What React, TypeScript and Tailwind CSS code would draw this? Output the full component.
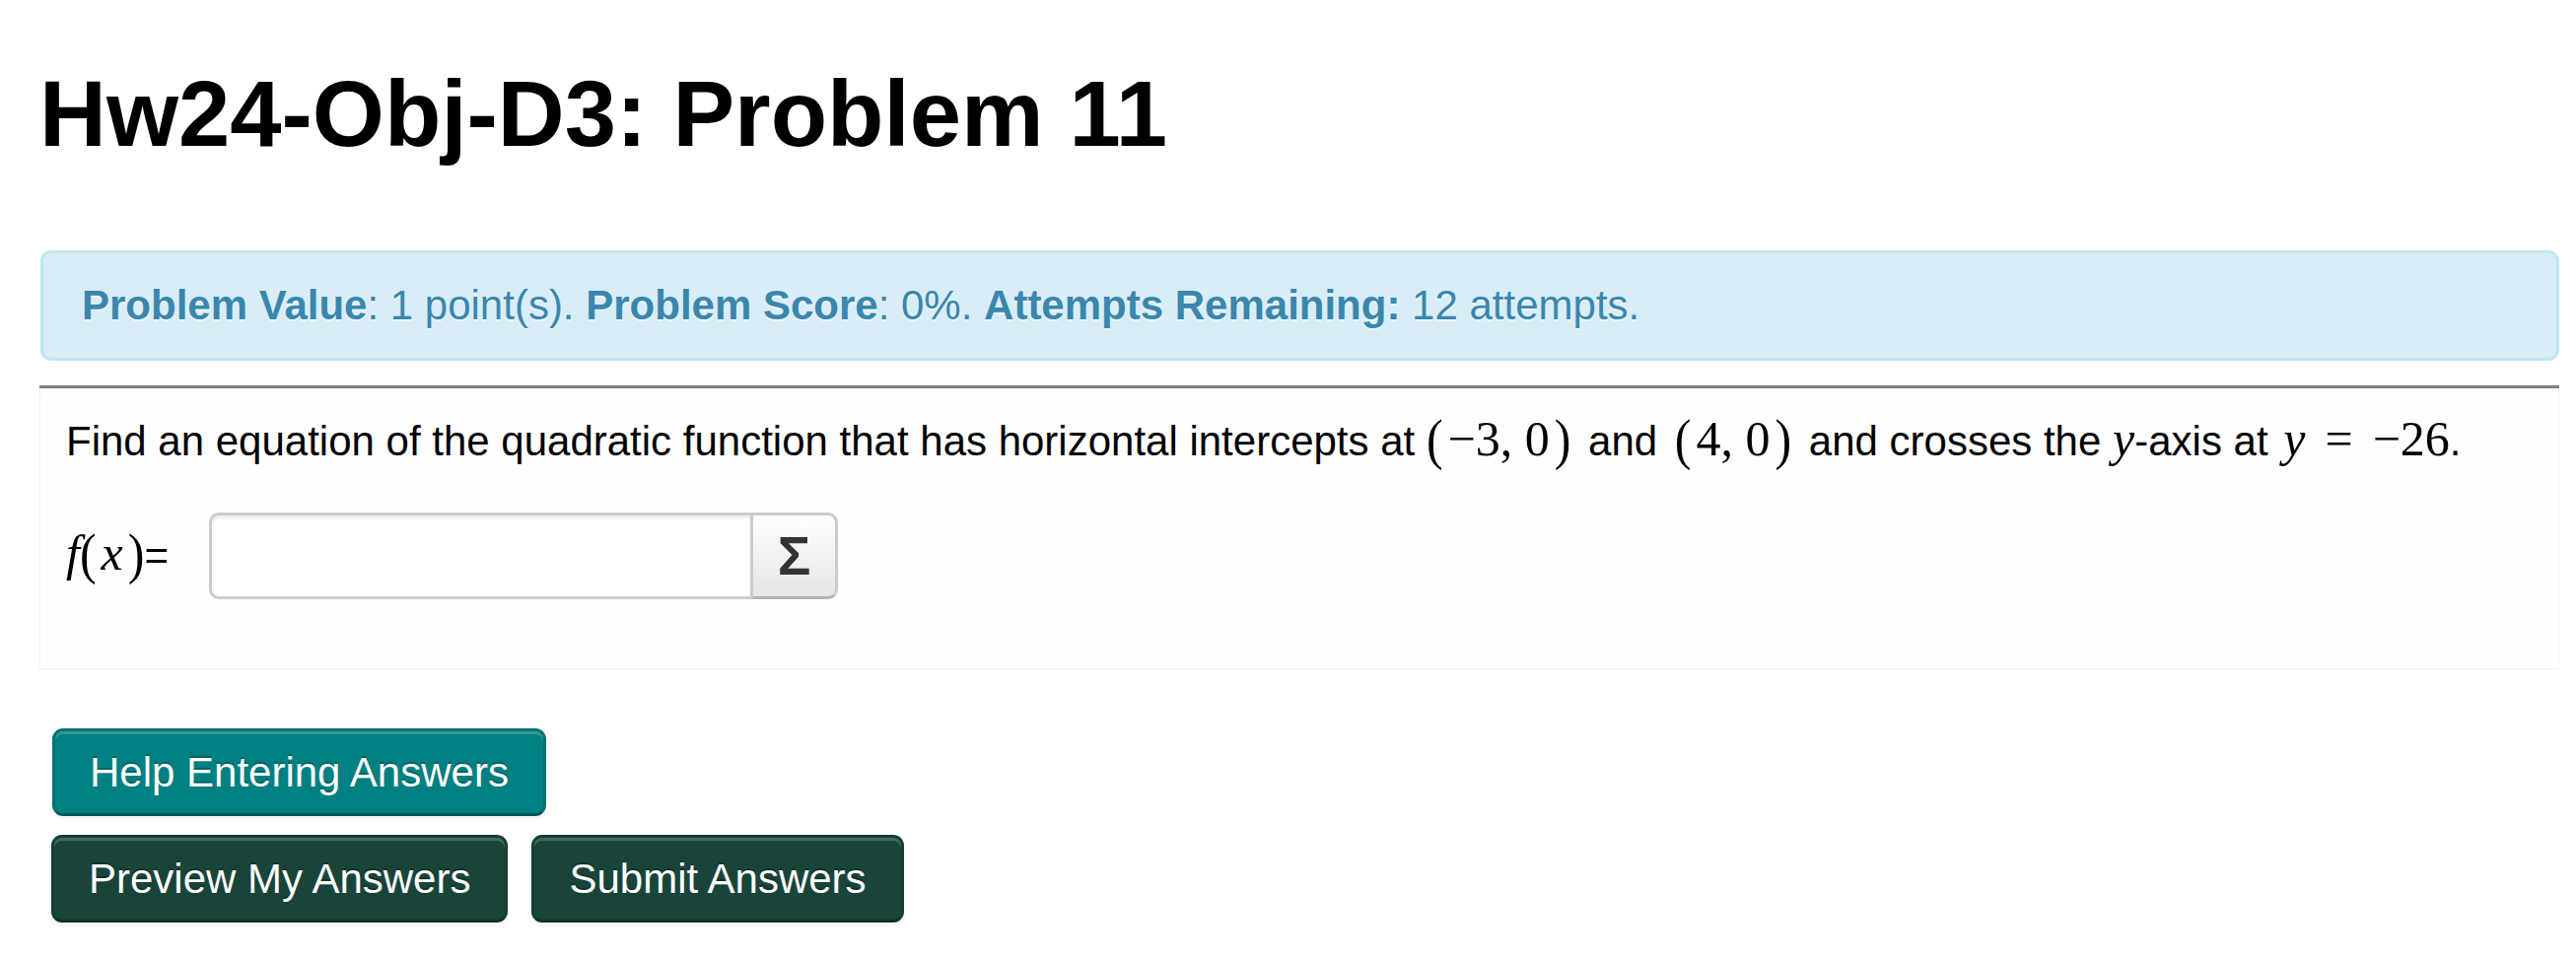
import React from 'react';

// Inline math pieces, roughly the size MathJax gives next to the body text
const M: React.FC<{ children: React.ReactNode; italic?: boolean; className?: string }> = ({
  children,
  italic,
  className = '',
}) => (
  <span
    className={`font-['Liberation_Serif','DejaVu_Serif',serif] text-[50px] leading-[0px] ${italic ? 'italic' : ''} ${className}`}
  >
    {children}
  </span>
);

const Paren: React.FC<{ children: React.ReactNode; className?: string }> = ({ children, className = '' }) => (
  <span className={`font-['Liberation_Serif','DejaVu_Serif',serif] text-[50px] leading-[0px] ${className}`}>
    <span className="mr-[5px] inline-block scale-y-[1.15] font-light">(</span>
    {children}
    <span className="ml-[5px] inline-block scale-y-[1.15] font-light">)</span>
  </span>
);

const btnBase =
  'h-[89px] rounded-[11px] border-[3px] border-[rgba(0,0,0,0.1)] border-b-[rgba(0,0,0,0.3)] px-[35px] text-[42px] leading-[52px] text-white shadow-[inset_0_3px_0_rgba(255,255,255,0.2),0_3px_5px_rgba(0,0,0,0.05)] [text-shadow:0_-2px_0_rgba(0,0,0,0.25)]';

export default function App() {
  return (
    <div className="min-h-screen bg-white pl-[40px] pr-[17px] font-['Liberation_Sans',Arial,sans-serif] text-black">
      {/* title */}
      <h1 className="pt-[64px] text-[94px] font-bold leading-[104px]">Hw24-Obj-D3: Problem 11</h1>

      {/* score info */}
      <div className="mt-[86px] ml-[1px] flex h-[112px] items-center rounded-[11px] border-[3px] border-[#bce8f1] bg-[#d9edf7] pl-[39px] text-[42px] leading-[52px] text-[#3a87ad] [text-shadow:0_2px_0_rgba(255,255,255,0.5)]">
        <span>
          <b>Problem Value</b>: 1 point(s). <b>Problem Score</b>: 0%. <b>Attempts Remaining:</b> 12 attempts.
        </span>
      </div>

      <div className="mt-[25px] h-[3px] bg-[#808080]" />

      {/* problem body */}
      <div className="border-x border-b border-[#f3f3f3] bg-[#fefefe] pt-[27px] pb-[70px] pl-[26px] shadow-[inset_0_6px_6px_-4px_rgba(0,0,0,0.04)]">
        <p className="text-[42px] leading-[53px]">
          Find an equation of the quadratic function that has horizontal intercepts at{' '}
          <Paren className="mr-[6px]">−3, 0</Paren> and <Paren className="mx-[6px]">4, 0</Paren> and crosses the{' '}
          <M italic>y</M>-axis at <M italic className="ml-[4px]">y</M>
          <M className="mx-[20px]">=</M>
          <M>−26</M>.
        </p>

        <div className="mt-[46px] flex items-center">
          <span className="w-[145px] text-[42px] leading-[52px]">
            <M italic>f</M>
            <Paren>
              <M italic>x</M>
            </Paren>
            =
          </span>
          <div className="flex h-[88px]">
            <input
              type="text"
              className="w-[549px] rounded-l-[10px] border-[3px] border-r-0 border-[#cccccc] bg-white shadow-[inset_0_3px_3px_rgba(0,0,0,0.075)] outline-none"
            />
            <button className="flex w-[89px] items-center justify-center rounded-r-[10px] border-[3px] border-[#cccccc] border-b-[#b3b3b3] bg-gradient-to-b from-white to-[#e6e6e6] text-[56px] font-bold text-[#333333]">
              Σ
            </button>
          </div>
        </div>
      </div>

      {/* actions */}
      <div className="mt-[60px] ml-[13px]">
        <button className={`${btnBase} bg-[#008080]`}>Help Entering Answers</button>
      </div>
      <div className="mt-[19px] ml-[12px] flex gap-[24px]">
        <button className={`${btnBase} bg-[#19443a]`}>Preview My Answers</button>
        <button className={`${btnBase} bg-[#19443a]`}>Submit Answers</button>
      </div>
    </div>
  );
}
